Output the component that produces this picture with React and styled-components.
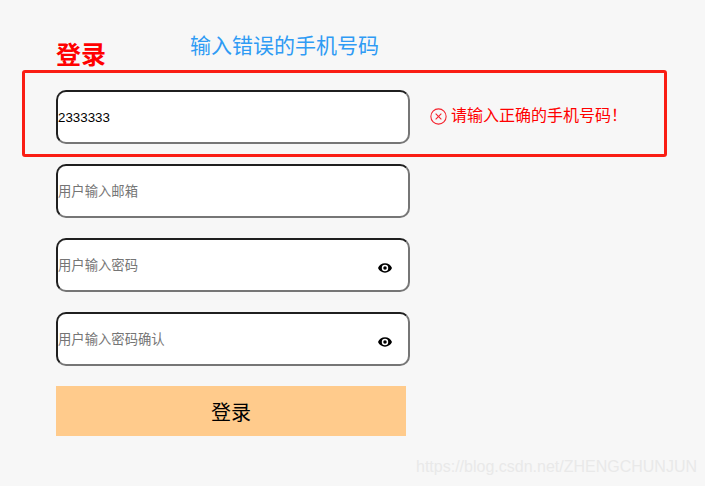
import React from 'react';
import styled, { createGlobalStyle } from 'styled-components';

const Global = createGlobalStyle`
  html, body {
    margin: 0;
    padding: 0;
    background: #f7f7f7;
  }
  body {
    font-family: "Liberation Sans", "Noto Sans CJK SC", sans-serif;
  }
`;

const Page = styled.div`
  position: relative;
  width: 705px;
  height: 486px;
  overflow: hidden;
  padding: 32px 0 0 56px;
  box-sizing: border-box;
`;

const Header = styled.div`
  display: flex;
  align-items: flex-start;
  height: 58px;
`;

const Title = styled.h1`
  margin: 8px 0 0;
  width: 134px;
  font-size: 25px;
  line-height: 30px;
  font-weight: 700;
  color: #ff0000;
`;

const Note = styled.div`
  margin-top: 1px;
  font-size: 21px;
  line-height: 26px;
  color: #2f9bf4;
`;

const Form = styled.form`
  display: flex;
  flex-direction: column;
  gap: 20px;
`;

const Row = styled.div`
  display: flex;
  align-items: center;
`;

const Field = styled.div`
  position: relative;
  width: 354px;
  height: 54px;
`;

const Input = styled.input`
  width: 100%;
  height: 100%;
  box-sizing: border-box;
  padding: 0;
  border-width: 2px;
  border-style: solid;
  border-color: #1f1f1f #767676 #767676 #1f1f1f;
  border-radius: 10px;
  background: #fff;
  outline: none;
  font-family: "Liberation Sans", "Noto Sans CJK SC", sans-serif;
  font-size: 13.33px;
  color: #000;
  &::placeholder {
    color: #757575;
    opacity: 1;
  }
`;

const EyeButton = styled.span`
  position: absolute;
  right: 18px;
  top: 25px;
  display: flex;
`;

const ErrorText = styled.div`
  display: flex;
  align-items: center;
  gap: 4px;
  margin-left: 20px;
  font-size: 16px;
  line-height: 20px;
  color: #ff0000;
  position: relative;
  top: -1px;
`;

const Submit = styled.button`
  width: 350px;
  height: 50px;
  border: none;
  padding: 0;
  background: #ffcb8c;
  font-family: "Liberation Sans", "Noto Sans CJK SC", sans-serif;
  font-size: 20px;
  color: #000;
`;

const Highlight = styled.div`
  position: absolute;
  left: 22px;
  top: 70px;
  width: 645px;
  height: 87px;
  box-sizing: border-box;
  border: 3px solid #fa1e14;
  border-radius: 3px;
  pointer-events: none;
`;

const Watermark = styled.div`
  position: absolute;
  right: 8px;
  bottom: 10px;
  font-size: 16px;
  line-height: 18px;
  color: #e9e9e9;
`;

const Eye = () => (
  <svg width="14" height="10" viewBox="0 0 24 16" fill="#000">
    <path fillRule="evenodd" d="M12 0C6.500 0 2 3.300 0 8c2 4.700 6.500 8 12 8s10-3.300 12-8c-2-4.700-6.500-8-12-8zm0 13.500a5.500 5.500 0 1 1 0-11 5.500 5.500 0 0 1 0 11zM12 5a3 3 0 1 0 0 6 3 3 0 0 0 0-6z" />
  </svg>
);

const ErrorIcon = () => (
  <svg width="17" height="17" viewBox="0 0 16 16" fill="none" stroke="#f5222d" strokeWidth="1">
    <circle cx="8" cy="8" r="7.200" />
    <path d="M5.300 5.300l5.400 5.400M10.700 5.300l-5.400 5.400" />
  </svg>
);

export default function App() {
  return (
    <Page>
      <Global />
      <Header>
        <Title>登录</Title>
        <Note>输入错误的手机号码</Note>
      </Header>
      <Form onSubmit={e => e.preventDefault()}>
        <Row>
          <Field>
            <Input defaultValue="2333333" />
          </Field>
          <ErrorText>
            <ErrorIcon />
            请输入正确的手机号码！
          </ErrorText>
        </Row>
        <Row>
          <Field>
            <Input placeholder="用户输入邮箱" />
          </Field>
        </Row>
        <Row>
          <Field>
            <Input placeholder="用户输入密码" />
            <EyeButton><Eye /></EyeButton>
          </Field>
        </Row>
        <Row>
          <Field>
            <Input placeholder="用户输入密码确认" />
            <EyeButton><Eye /></EyeButton>
          </Field>
        </Row>
        <Submit type="submit">登录</Submit>
      </Form>
      <Highlight />
      <Watermark>https://blog.csdn.net/ZHENGCHUNJUN</Watermark>
    </Page>
  );
}
